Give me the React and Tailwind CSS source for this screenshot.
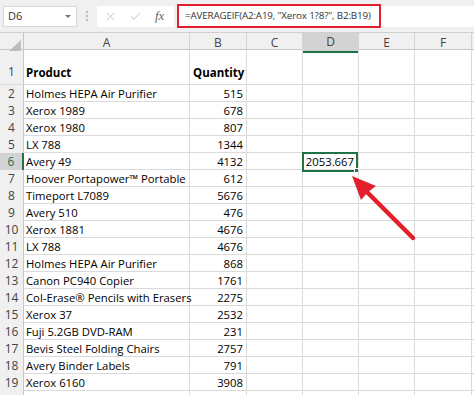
import { X, Check } from 'lucide-react';
import clsx from 'clsx';

const data = [
    ['Holmes HEPA Air Purifier', 515],
    ['Xerox 1989', 678],
    ['Xerox 1980', 807],
    ['LX 788', 1344],
    ['Avery 49', 4132],
    ['Hoover Portapower™ Portable', 612],
    ['Timeport L7089', 5676],
    ['Avery 510', 476],
    ['Xerox 1881', 4676],
    ['LX 788', 4676],
    ['Holmes HEPA Air Purifier', 868],
    ['Canon PC940 Copier', 1761],
    ['Col-Erase® Pencils with Erasers', 2275],
    ['Xerox 37', 2532],
    ['Fuji 5.2GB DVD-RAM', 231],
    ['Bevis Steel Folding Chairs', 2757],
    ['Avery Binder Labels', 791],
    ['Xerox 6160', 3908],
];

const cols = ['A', 'B', 'C', 'D', 'E', 'F'];
const gridCols = 'grid grid-cols-[24px_166px_57px_56px_56px_56px_57px_1fr]';

function FormulaBar() {
    return (
        <div className="h-[33px] bg-[#f0f0f0] border-b border-[#d0d0d0] flex items-center relative">
            {/* Name box */}
            <div className="ml-[3px] w-[74px] h-[21px] bg-white border border-[#d8d8d8] flex items-center justify-between pl-[4px] pr-[5px] text-[11px] text-[#333]">
                <span>D6</span>
                <span className="w-0 h-0 border-l-[3px] border-r-[3px] border-t-[3px] border-l-transparent border-r-transparent border-t-[#777]" />
            </div>
            {/* dots */}
            <div className="ml-[9px] flex flex-col gap-[2px]">
                <span className="w-[2px] h-[2px] bg-[#bbb]" />
                <span className="w-[2px] h-[2px] bg-[#bbb]" />
                <span className="w-[2px] h-[2px] bg-[#bbb]" />
            </div>
            {/* buttons */}
            <div className="ml-[9px] w-[77px] h-[21px] bg-white flex items-center pl-[7px]">
                <X className="w-[13px] h-[13px] text-[#b5b5b5]" strokeWidth={1.5} />
                <Check className="w-[13px] h-[13px] text-[#b5b5b5] ml-[12px]" strokeWidth={1.5} />
                <span className="ml-[13px] text-[13px] italic text-[#666] font-['Liberation_Serif',serif]">fx</span>
            </div>
            {/* formula */}
            <div className="ml-[4px] flex-1 h-[21px] bg-white flex items-center">
                <div className="-ml-[1px] h-[24px] w-[204px] border-[2.5px] border-[#e0202a] flex items-center pl-[6px] text-[9.8px] tracking-[-0.15px] text-[#333] whitespace-nowrap">
                    =AVERAGEIF(A2:A19, "Xerox 1?8?", B2:B19)
                </div>
            </div>
        </div>
    );
}

export default function App() {
    return (
        <div className="w-[474px] h-[395px] overflow-hidden bg-white relative font-['Open_Sans',sans-serif]">
            <FormulaBar />

            {/* column headers */}
            <div className={clsx(gridCols, 'h-[17px] bg-[#f0f0f0] border-b border-[#c6c6c6]')}>
                <div className="border-r border-[#c6c6c6] relative">
                    <span className="absolute right-[2px] bottom-[2px] w-0 h-0 border-b-[11px] border-l-[12px] border-l-transparent border-b-[#bdbdbd]" />
                </div>
                {cols.map((c) => (
                    <div
                        key={c}
                        className={clsx(
                            'flex items-center justify-center text-[12px] text-[#444] border-r border-[#d4d4d4]',
                            c === 'D' && 'bg-[#d3d3d3] border-b-2 border-b-[#217346]'
                        )}
                    >
                        {c}
                    </div>
                ))}
                <div />
            </div>

            {/* row 1 */}
            <div className={clsx(gridCols, 'h-[35px] border-b border-[#dadada]')}>
                <div className="bg-[#f0f0f0] border-r border-[#c6c6c6] flex items-end justify-center pb-[3px] text-[12px] text-[#444]">1</div>
                <div className="border-r border-[#dadada] flex items-end pl-[2px] pb-[3px] text-[11.5px] font-bold text-black">Product</div>
                <div className="border-r border-[#dadada] flex items-end pl-[3px] pb-[3px] text-[11.5px] font-bold text-black">Quantity</div>
                <div className="border-r border-[#dadada]" />
                <div className="border-r border-[#dadada]" />
                <div className="border-r border-[#dadada]" />
                <div className="border-r border-[#dadada]" />
                <div />
            </div>

            {data.map(([name, qty], i) => {
                const n = i + 2;
                const sel = n === 6;
                return (
                    <div key={n} className={clsx(gridCols, 'h-[17px] border-b border-[#dadada]')}>
                        <div
                            className={clsx(
                                'flex items-center justify-center text-[12px] border-r',
                                sel ? 'bg-[#d3d3d3] text-[#217346] border-r-2 border-r-[#217346]' : 'bg-[#f0f0f0] text-[#444] border-[#c6c6c6]'
                            )}
                        >
                            {n}
                        </div>
                        <div className="border-r border-[#dadada] flex items-center pl-[2px] text-[11.3px] text-black whitespace-nowrap">{name}</div>
                        <div className="border-r border-[#dadada] flex items-center justify-end pr-[3px] text-[11.3px] text-black">{qty}</div>
                        <div className="border-r border-[#dadada]" />
                        <div className="border-r border-[#dadada] relative">
                            {sel && (
                                <div className="absolute -left-[1px] -top-[1px] right-0 -bottom-[1px] border-2 border-[#217346] flex items-center justify-end pr-[2px] text-[11.3px] text-black">
                                    2053.667
                                    <span className="absolute -right-[3px] -bottom-[3px] w-[5px] h-[5px] bg-[#217346] border border-white" />
                                </div>
                            )}
                        </div>
                        <div className="border-r border-[#dadada]" />
                        <div className="border-r border-[#dadada]" />
                        <div />
                    </div>
                );
            })}
            <div className={clsx(gridCols, 'h-[17px]')}>
                <div className="bg-[#f0f0f0] border-r border-[#c6c6c6]" />
                <div className="border-r border-[#dadada]" />
                <div className="border-r border-[#dadada]" />
                <div className="border-r border-[#dadada]" />
                <div className="border-r border-[#dadada]" />
                <div className="border-r border-[#dadada]" />
                <div className="border-r border-[#dadada]" />
                <div />
            </div>

            {/* red arrow */}
            <svg className="absolute left-0 top-0 pointer-events-none" width="474" height="395">
                <line x1="413" y1="238" x2="366" y2="191" stroke="#e21f2b" strokeWidth="4.5" strokeLinecap="round" />
                <polygon points="352,176 376,186 368,192 361,200" fill="#e21f2b" />
            </svg>
        </div>
    );
}
